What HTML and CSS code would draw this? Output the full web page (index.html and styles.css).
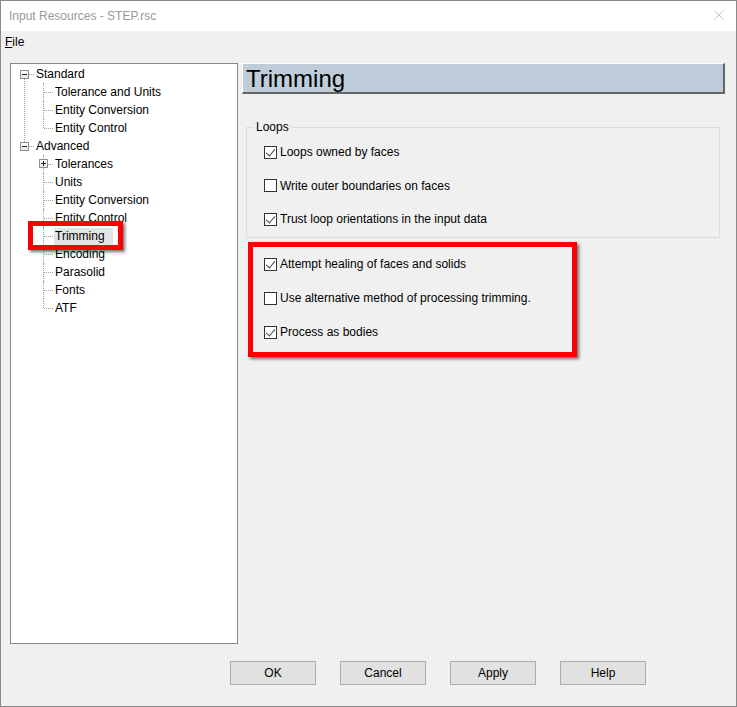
FILE: index.html
```html
<!DOCTYPE html>
<html lang="en">
<head>
  <meta charset="UTF-8" />
  <title>Input Resources - STEP.rsc</title>
  <link rel="stylesheet" href="styles.css">
</head>
<body>
  <div class="window">
    <div class="titlebar">
      <span class="title">Input Resources - STEP.rsc</span>
      <svg class="close" width="10" height="10" viewBox="0 0 10 10">
        <path d="M0.5 0.5 L9.5 9.5 M9.5 0.5 L0.5 9.5" stroke="#c8c8c8" stroke-width="1" fill="none" />
      </svg>
    </div>
    <div class="menubar">
      <span class="menu"><u>F</u>ile</span>
    </div>

    <div class="content">
      <div class="tree-panel">
        <ul class="tree">
          <li class="root">
            <div class="row"><span class="toggle open"></span><span class="label">Standard</span></div>
            <ul class="children">
              <li><div class="row"><span class="label">Tolerance and Units</span></div></li>
              <li><div class="row"><span class="label">Entity Conversion</span></div></li>
              <li class="last"><div class="row"><span class="label">Entity Control</span></div></li>
            </ul>
          </li>
          <li class="root last">
            <div class="row"><span class="toggle open"></span><span class="label">Advanced</span></div>
            <ul class="children">
              <li class="has-box"><div class="row"><span class="toggle"></span><span class="label">Tolerances</span></div></li>
              <li><div class="row"><span class="label">Units</span></div></li>
              <li><div class="row"><span class="label">Entity Conversion</span></div></li>
              <li><div class="row"><span class="label">Entity Control</span></div></li>
              <li><div class="row"><span class="label selected">Trimming</span></div></li>
              <li><div class="row"><span class="label">Encoding</span></div></li>
              <li><div class="row"><span class="label">Parasolid</span></div></li>
              <li><div class="row"><span class="label">Fonts</span></div></li>
              <li class="last"><div class="row"><span class="label">ATF</span></div></li>
            </ul>
          </li>
        </ul>
        <div class="mark tree-mark"></div>
      </div>

      <div class="page">
        <div class="page-header">Trimming</div>

        <fieldset class="group">
          <legend>Loops</legend>
          <label class="check"><span class="box checked"></span>Loops owned by faces</label>
          <label class="check"><span class="box"></span>Write outer boundaries on faces</label>
          <label class="check"><span class="box checked"></span>Trust loop orientations in the input data</label>
        </fieldset>

        <div class="mark options">
          <label class="check"><span class="box checked"></span>Attempt healing of faces and solids</label>
          <label class="check"><span class="box"></span>Use alternative method of processing trimming.</label>
          <label class="check"><span class="box checked"></span>Process as bodies</label>
        </div>
      </div>
    </div>

    <div class="buttons">
      <button>OK</button>
      <button>Cancel</button>
      <button>Apply</button>
      <button>Help</button>
    </div>
  </div>
</body>
</html>
```

FILE: styles.css
```css
* {
  box-sizing: border-box;
}
body {
  margin: 0;
  width: 737px;
  height: 707px;
  overflow: hidden;
  font-family: "Liberation Sans", Arial, sans-serif;
  font-size: 12px;
  background: #2b2b2b;
}

.window {
  width: 737px;
  height: 707px;
  border: 1px solid #8a8a8a;
  background: #f0f0f0;
  display: flex;
  flex-direction: column;
}

.titlebar {
  height: 30px;
  flex: none;
  background: #fff;
  display: flex;
  align-items: center;
  justify-content: space-between;
  padding: 0 12px 0 8px;
}
.title {
  color: #999;
}
.close {
  display: block;
  margin-top: -2px;
}

.menubar {
  height: 21px;
  flex: none;
  display: flex;
  align-items: center;
  padding-left: 4px;
  color: #000;
}

.content {
  display: flex;
  gap: 4px;
  padding: 11px 11px 0 9px;
  height: 592px;
  flex: none;
}

/* tree */
.tree-panel {
  width: 228px;
  height: 581px;
  background: #fff;
  border: 1px solid #828790;
  position: relative;
}
.tree,
.children {
  list-style: none;
  margin: 0;
  padding: 0;
}
.tree {
  padding-top: 1px;
}
.tree li {
  position: relative;
}
.row {
  height: 18px;
  display: flex;
  align-items: center;
  position: relative;
}
.root > .row {
  padding-left: 9px;
}
.root > .row .label {
  margin-left: 6px;
}
.root > .row::after {
  content: "";
  position: absolute;
  left: 18px;
  top: 9px;
  width: 5px;
  border-top: 1px dotted #a0a0a0;
}
.root:not(.last)::before {
  content: "";
  position: absolute;
  left: 13px;
  top: 14px;
  bottom: -5px;
  border-left: 1px dotted #a0a0a0;
}
.children li > .row {
  padding-left: 43px;
}
.children li::before {
  content: "";
  position: absolute;
  left: 32px;
  top: 0;
  height: 100%;
  border-left: 1px dotted #a0a0a0;
}
.children li.last::before {
  height: 9px;
}
.children li > .row::after {
  content: "";
  position: absolute;
  left: 33px;
  top: 9px;
  width: 9px;
  border-top: 1px dotted #a0a0a0;
}
.has-box > .row .toggle {
  position: absolute;
  left: 28px;
  top: 4px;
  z-index: 1;
}
.label {
  padding: 0 1px;
  line-height: 17px;
  color: #000;
  white-space: nowrap;
}
.label.selected {
  background: #e3e3e3;
  padding-right: 8px;
}

.toggle {
  width: 9px;
  height: 9px;
  flex: none;
  border: 1px solid #919191;
  background: linear-gradient(#fff, #e6e6e6);
  position: relative;
}
.toggle::before,
.toggle::after {
  content: "";
  position: absolute;
  background: #222;
}
.toggle::before {
  left: 1px;
  top: 3px;
  width: 5px;
  height: 1px;
}
.toggle::after {
  left: 3px;
  top: 1px;
  width: 1px;
  height: 5px;
}
.toggle.open::after {
  display: none;
}

/* red annotation frames */
.mark {
  border: 5px solid #ff0000;
  box-shadow: 2px 2px 3px rgba(0, 0, 0, 0.55);
}
.tree-mark {
  position: absolute;
  left: 17px;
  top: 157px;
  width: 95px;
  height: 29px;
}

/* right page */
.page {
  width: 483px;
}
.page-header {
  height: 31px;
  background: #bfcddb;
  border-top: 1px solid #fff;
  border-left: 1px solid #fff;
  border-right: 2px solid #646464;
  border-bottom: 2px solid #646464;
  font-size: 24px;
  line-height: 29px;
  padding-left: 3px;
  color: #000;
}

.group {
  margin: 26px 5px 0 4px;
  padding: 11px 0 11px 17px;
  border: 1px solid #dcdcdc;
  display: flex;
  flex-direction: column;
  gap: 19.5px;
}
.group legend {
  margin-left: -10px;
  padding: 0 2px;
  line-height: 14px;
  color: #000;
}

.check {
  display: flex;
  align-items: center;
  gap: 3px;
  height: 14px;
  color: #000;
  white-space: nowrap;
}
.box {
  width: 13px;
  height: 13px;
  flex: none;
  border: 1px solid #333;
  background: #fff;
  position: relative;
}
.box.checked::after {
  content: "";
  position: absolute;
  left: 3px;
  top: 0px;
  width: 4px;
  height: 8px;
  border-right: 1px solid #444;
  border-bottom: 1px solid #444;
  transform: rotate(40deg);
}

.options {
  margin: 4px 0 0 6px;
  width: 329px;
  padding: 10px 0 13px 11px;
  display: flex;
  flex-direction: column;
  gap: 20px;
}

.buttons {
  display: flex;
  gap: 24px;
  padding-left: 229px;
  margin-top: 17px;
}
.buttons button {
  width: 86px;
  height: 24px;
  background: #e1e1e1;
  border: 1px solid #adadad;
  font-family: inherit;
  font-size: 12px;
  color: #000;
  padding: 0;
}
```
